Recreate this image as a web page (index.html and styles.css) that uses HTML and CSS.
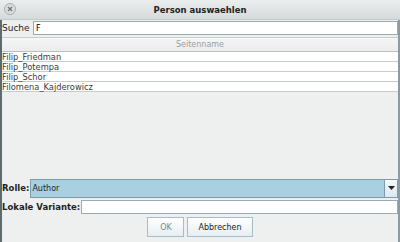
FILE: index.html
```html
<!DOCTYPE html>
<html lang="de">
<head>
    <meta charset="UTF-8">
    <title>Person auswaehlen</title>
    <link rel="stylesheet" href="styles.css">
</head>
<body>
    <div class="dialog">
        <div class="titlebar">
            <span class="close-btn">
                <svg width="12" height="12" viewBox="0 0 12 12">
                    <circle cx="6" cy="6" r="5.5" fill="#d9dcdc" stroke="#a9aeae"/>
                    <path d="M4 4 L8 8 M8 4 L4 8" stroke="#6f7575" stroke-width="1.2"/>
                </svg>
            </span>
            <span class="title">Person auswaehlen</span>
        </div>

        <div class="content">
            <div class="search-row">
                <label class="label search-label">Suche</label>
                <input class="text-input" type="text" value="F">
            </div>

            <div class="table">
                <div class="table-head">Seitenname</div>
                <div class="table-row">Filip_Friedman</div>
                <div class="table-row">Filip_Potempa</div>
                <div class="table-row">Filip_Schor</div>
                <div class="table-row">Filomena_Kajderowicz</div>
            </div>

            <div class="role-row">
                <label class="label bold">Rolle:</label>
                <div class="combo">
                    <span class="combo-value">Author</span>
                    <span class="combo-arrow">
                        <svg width="7" height="4" viewBox="0 0 7 4"><path d="M0 0 H7 L3.5 4 Z" fill="#222"/></svg>
                    </span>
                </div>
            </div>

            <div class="variant-row">
                <label class="label bold">Lokale Variante:</label>
                <input class="text-input" type="text">
            </div>

            <div class="buttons">
                <button class="btn btn-ok">OK</button>
                <button class="btn">Abbrechen</button>
            </div>
        </div>
    </div>
</body>
</html>
```

FILE: styles.css
```css
* {
    box-sizing: border-box;
}

body {
    margin: 0;
    font-family: "DejaVu Sans", sans-serif;
    font-size: 8px;
    color: #1e1e1e;
    background-color: #eef0f0;
}

.dialog {
    width: 400px;
    height: 242px;
    display: flex;
    flex-direction: column;
}

.titlebar {
    height: 20px;
    display: flex;
    align-items: center;
    justify-content: center;
    position: relative;
    background: linear-gradient(#eceeee, #d5dada);
    border-bottom: 1px solid #c4c9c9;
}

.close-btn {
    position: absolute;
    left: 4px;
    top: 3px;
    height: 12px;
}

.title {
    font-weight: bold;
    font-size: 8.5px;
    color: #222;
}

.content {
    flex: 1;
    display: flex;
    flex-direction: column;
    border-left: 2px solid #5d6b6e;
    border-right: 2px solid #8a9ba3;
    padding-top: 1px;
}

.label {
    padding: 0 1px 0 0;
    white-space: nowrap;
    font-size: 8.5px;
}

.search-label {
    width: 31px;
    font-size: 9px;
}

.bold {
    font-weight: bold;
}

.search-row,
.variant-row,
.role-row {
    display: flex;
    align-items: center;
}

.search-row {
    height: 14px;
}

.text-input {
    flex: 1;
    height: 14px;
    border: 1px solid #9aaab1;
    background: #fff;
    font-family: "DejaVu Sans", sans-serif;
    font-size: 8px;
    padding: 0 2px;
    margin: 0;
    outline: none;
}

.table {
    flex: 1;
    margin-top: 2px;
    border-top: 1px solid #c7cdcf;
}

.table-head {
    height: 14px;
    line-height: 13px;
    text-align: center;
    color: #9a9d9d;
    background: linear-gradient(#f6f6f6, #ececec);
    border-bottom: 1px solid #b8c0c3;
}

.table-row {
    height: 10px;
    line-height: 11px;
    font-size: 8.3px;
    background: #fff;
    color: #3a3a3a;
    border-bottom: 1px solid #c7cdcf;
}

.table-row:first-of-type {
    margin-top: 1px;
}

.role-row {
    height: 20px;
    margin-top: 2px;
    margin-bottom: 1px;
}

.combo {
    flex: 1;
    height: 19px;
    display: flex;
    align-items: center;
    background: #a9d0e1;
    border: 1px solid #7f9aa8;
}

.combo-value {
    flex: 1;
    padding-left: 1px;
}

.combo-arrow {
    width: 13px;
    height: 100%;
    display: flex;
    align-items: center;
    justify-content: center;
    border-left: 1px solid #7f9aa8;
    background: linear-gradient(#f4f8fa, #dce8ee);
}

.variant-row {
    height: 15px;
}

.buttons {
    display: flex;
    justify-content: center;
    gap: 3px;
    padding: 3px 0 5px;
}

.btn {
    height: 20px;
    font-family: "DejaVu Sans", sans-serif;
    font-size: 8px;
    color: #222;
    border: 1px solid #a9bcc5;
    background: linear-gradient(#ffffff, #e6eef2);
    padding: 0 10px;
}

.btn-ok {
    width: 37px;
    color: #7f8688;
}
```
